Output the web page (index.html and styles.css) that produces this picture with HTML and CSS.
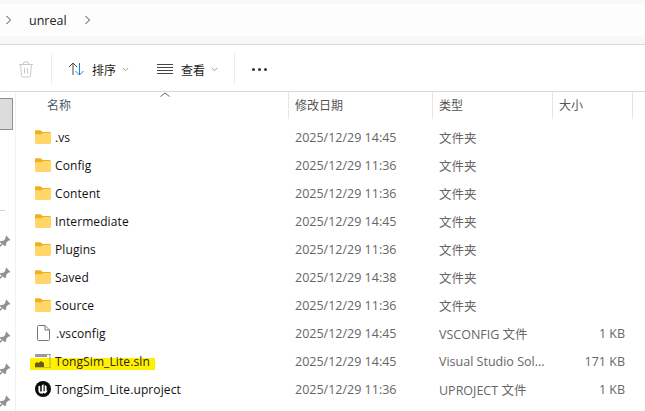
FILE: index.html
```html
<!DOCTYPE html>
<html lang="zh">
<head>
<meta charset="utf-8">
<title>unreal</title>
<link rel="stylesheet" href="styles.css">
</head>
<body>
<svg class="defs" width="0" height="0" aria-hidden="true">
  <defs>
    <symbol id="folder" viewBox="0 0 16 14">
      <path d="M0 1.600C0 .8.6.3 1.300.3h3.900c.5 0 .8.2 1.100.5L7.600 2h7c.8 0 1.400.6 1.400 1.400V5H0z" fill="#f2b01e"/>
      <path d="M0 4.300h6.200c.5 0 .9-.2 1.300-.5L8.600 3H16v9.500c0 .8-.6 1.400-1.400 1.400H1.400C.6 13.900 0 13.300 0 12.500z" fill="#ffd768"/>
    </symbol>
    <symbol id="pin" viewBox="0 0 12 12">
      <path d="M7.500.5l4 4-1.200.8-.8-.2-2 2.200.1 2-1.200 1L1.700 6.600l1-1.200 2 .1 2.200-2-.2-.8z" fill="#8b9197"/>
      <path d="M3.600 8.400L.8 11.200" stroke="#8b9197" stroke-width="1.400"/>
    </symbol>
  </defs>
</svg>
<div class="window">
  <div class="addressband">
    <div class="address">
      <svg class="crumb" width="7" height="10" viewBox="0 0 7 10"><path d="M1.500 1l4 4-4 4" fill="none" stroke="#444" stroke-width="1"/></svg>
      <span class="crumbtext">unreal</span>
      <svg class="crumb" width="7" height="10" viewBox="0 0 7 10"><path d="M1.500 1l4 4-4 4" fill="none" stroke="#444" stroke-width="1"/></svg>
    </div>
  </div>
  <div class="toolbar">
    <svg class="trash" width="16" height="17" viewBox="0 0 16 17"><path d="M1 3.500h14M5.500 3.500V2c0-.6.4-1 1-1h3c.6 0 1 .4 1 1v1.500M2.600 3.500l.9 11.300c0 .7.600 1.200 1.200 1.200h6.600c.600 0 1.200-.5 1.200-1.200l.9-11.300M6.500 7v5.500M9.500 7v5.500" fill="none" stroke="#c9c9c9" stroke-width="1"/></svg>
    <span class="sep"></span>
    <div class="tool tool-sort">
      <svg width="17" height="14" viewBox="0 0 17 14"><path d="M5 13V1M1 5l4-4 4 4" fill="none" stroke="#4a4a4a" stroke-width="1"/><path d="M11.500 1v12M7.500 9l4 4 4-4" fill="none" stroke="#1f80d0" stroke-width="1"/></svg>
      <span class="toollabel">排序</span>
      <svg class="chev" width="7" height="5" viewBox="0 0 7 5"><path d="M.8 1l2.700 2.700L6.200 1" fill="none" stroke="#9a9a9a" stroke-width="1"/></svg>
    </div>
    <div class="tool tool-view">
      <svg width="16" height="11" viewBox="0 0 16 11"><path d="M0 .5h16M0 3.500h16M0 6.500h16M0 9.500h16" stroke="#444" stroke-width="1"/></svg>
      <span class="toollabel">查看</span>
      <svg class="chev" width="7" height="5" viewBox="0 0 7 5"><path d="M.8 1l2.700 2.700L6.200 1" fill="none" stroke="#9a9a9a" stroke-width="1"/></svg>
    </div>
    <span class="sep sep-last"></span>
    <div class="more"><i></i><i></i><i></i></div>
  </div>
  <div class="body">
    <aside class="side">
      <div class="thumb"></div>
      <div class="rule"></div>
      <div class="pins">
        <svg class="pin"><use href="#pin"/></svg>
        <svg class="pin"><use href="#pin"/></svg>
        <svg class="pin"><use href="#pin"/></svg>
        <svg class="pin"><use href="#pin"/></svg>
        <svg class="pin"><use href="#pin"/></svg>
        <svg class="pin"><use href="#pin"/></svg>
      </div>
    </aside>
    <main class="list">
      <svg class="sortmark" width="10" height="5" viewBox="0 0 10 5"><path d="M.5 4.500L5 1l4.500 3.500" fill="none" stroke="#666" stroke-width="1"/></svg>
      <div class="head">
        <div class="hcell hname">名称</div>
        <div class="hcell hdate">修改日期</div>
        <div class="hcell htype">类型</div>
        <div class="hcell hsize">大小</div>
      </div>
      <div class="rows">
        <div class="row"><div class="name"><svg class="ico"><use href="#folder"/></svg><span>.vs</span></div><div class="date">2025/12/29 14:45</div><div class="type">文件夹</div><div class="size"></div></div>
        <div class="row"><div class="name"><svg class="ico"><use href="#folder"/></svg><span>Config</span></div><div class="date">2025/12/29 11:36</div><div class="type">文件夹</div><div class="size"></div></div>
        <div class="row"><div class="name"><svg class="ico"><use href="#folder"/></svg><span>Content</span></div><div class="date">2025/12/29 11:36</div><div class="type">文件夹</div><div class="size"></div></div>
        <div class="row"><div class="name"><svg class="ico"><use href="#folder"/></svg><span>Intermediate</span></div><div class="date">2025/12/29 14:45</div><div class="type">文件夹</div><div class="size"></div></div>
        <div class="row"><div class="name"><svg class="ico"><use href="#folder"/></svg><span>Plugins</span></div><div class="date">2025/12/29 11:36</div><div class="type">文件夹</div><div class="size"></div></div>
        <div class="row"><div class="name"><svg class="ico"><use href="#folder"/></svg><span>Saved</span></div><div class="date">2025/12/29 14:38</div><div class="type">文件夹</div><div class="size"></div></div>
        <div class="row"><div class="name"><svg class="ico"><use href="#folder"/></svg><span>Source</span></div><div class="date">2025/12/29 11:36</div><div class="type">文件夹</div><div class="size"></div></div>
        <div class="row"><div class="name"><svg class="ico ico-file" viewBox="0 0 13 16"><path d="M.5 1.500c0-.6.4-1 1-1h6.500l4.500 4.500v9.500c0 .6-.4 1-1 1h-10c-.6 0-1-.4-1-1zM8 .5V5h4.500" fill="#fff" stroke="#777" stroke-width="1"/></svg><span>.vsconfig</span></div><div class="date">2025/12/29 14:45</div><div class="type">VSCONFIG 文件</div><div class="size">1 KB</div></div>
        <div class="row row-sln"><div class="name"><div class="mark"><svg class="ico ico-sln" viewBox="0 0 16 14"><rect x="14.500" y="1" width="1" height="12" fill="#a8a850"/><rect x="0" y="0" width="16" height="1" fill="#9a9a9a"/><rect x="0" y="1" width="12" height="2" fill="#9a9a9a"/><rect x="0" y="13" width="16" height="1" fill="#c8c030"/><path d="M0 13V9.500l2-1.500 1.500 1L6 7l3 2v4z" fill="#6b5a10"/></svg><span>TongSim_Lite.sln</span></div></div><div class="date">2025/12/29 14:45</div><div class="type">Visual Studio Sol...</div><div class="size">171 KB</div></div>
        <div class="row"><div class="name"><svg class="ico ico-ue" viewBox="0 0 16 16"><circle cx="8" cy="8" r="8" fill="#0a0a0a"/><path d="M3.400 5.200c.7-.7 1.800-.7 1.800.4v4.300c0 .7.7.9 1.500.3V4.700c.5-.7 1.100-1.100 1.900-1.400v7.300l1.100-.6V4.100c.8.300 1.400.8 1.900 1.500v4.400l1-.7c-.3 1.400-1.400 2.700-2.900 3.400l-1.100-1-1.100 1c-1.900.1-4.100-.9-4.100-3.300z" fill="#fff"/></svg><span>TongSim_Lite.uproject</span></div><div class="date">2025/12/29 11:36</div><div class="type">UPROJECT 文件</div><div class="size">1 KB</div></div>
      </div>
    </main>
  </div>
</div>
</body>
</html>
```
FILE: styles.css
```css
* { box-sizing: border-box; }
html, body { margin: 0; padding: 0; }
body {
  width: 645px;
  height: 411px;
  overflow: hidden;
  background: #fff;
  font-family: "Noto Sans CJK SC", "Open Sans", sans-serif;
  font-size: 12px;
  color: #1a1a1a;
}
.defs { position: absolute; }
.window { display: flex; flex-direction: column; height: 411px; }

.addressband {
  height: 45px;
  padding: 4px 0 8px;
  background: #f8f8f8;
  border-bottom: 1px solid #d9d9d9;
}
.address {
  height: 32px;
  background: #fdfdfd;
  display: flex;
  align-items: center;
  padding-left: 5px;
}
.crumbtext {
  font-family: "Open Sans", sans-serif;
  font-size: 12.5px;
  margin: 0 17px 0 17px;
  color: #222;
}

.toolbar {
  height: 47px;
  border-bottom: 1px solid #d9d9d9;
  display: flex;
  align-items: center;
  padding-left: 18px;
  padding-top: 2px;
}
.trash { margin-right: 17px; }
.sep { width: 1px; height: 32px; background: #ececec; }
.tool { display: flex; align-items: center; }
.tool-sort { margin-left: 16px; }
.tool-view { margin-left: 28px; }
.toollabel {
  font-size: 12px;
  color: #222;
  margin-left: 7px;
  margin-right: 6px;
}
.tool-view .toollabel { margin-left: 8px; }
.sep-last { margin-left: 16px; }
.more { display: flex; gap: 3px; margin-left: 17px; }
.more i { width: 3px; height: 3px; border-radius: 50%; background: #333; }

.body { flex: 1; display: flex; min-height: 0; }
.side {
  width: 16px;
  border-right: 1px solid #f1f1f1;
  position: relative;
}
.thumb {
  width: 13px;
  height: 32px;
  margin-top: 6px;
  background: #dcdcdc;
  border: 1px solid #8f8f8f;
  border-left: 0;
}
.rule { width: 5px; height: 1px; margin-top: 80px; background: #d4d4d4; }
.pins {
  display: flex;
  flex-direction: column;
  gap: 19px;
  margin-top: 24px;
}
.pin { width: 13px; height: 13px; margin-left: -2px; }

.list { flex: 1; position: relative; }
.sortmark { position: absolute; left: 144px; top: 0; }
.head { display: flex; height: 31px; color: #4c5a6a; font-size: 12px; }
.hcell { height: 27px; line-height: 26px; border-right: 1px solid #e5e5e5; }
.hname { width: 273px; padding-left: 31px; }
.hdate { width: 144px; padding-left: 6px; color: #555; }
.htype { width: 120px; padding-left: 6px; color: #555; }
.hsize { width: 80px; padding-left: 6px; color: #555; }

.rows { display: flex; flex-direction: column; }
.row { display: flex; height: 28px; align-items: center; font-size: 12px; }
.name { width: 273px; padding-left: 19px; display: flex; align-items: center; color: #111; font-family: "Open Sans", sans-serif; letter-spacing: .1px; }
.ico { width: 16px; height: 14px; margin-right: 4px; flex: none; }
.ico-file { height: 16px; width: 13px; margin: 0 6px 0 2px; }
.ico-ue { height: 16px; }
.mark {
  display: flex;
  align-items: center;
  position: relative;
  height: 14px;
  margin-left: -5px;
  padding: 0 5px 0 5px;
  color: #2a1f1f;
}
.mark > * { position: relative; }
.mark::before {
  content: "";
  position: absolute;
  left: 0;
  right: 0;
  top: 4px;
  height: 12px;
  background: #fff000;
}
.date { width: 144px; padding-left: 6px; color: #666; font-family: "Open Sans", sans-serif; font-size: 12.5px; }
.type { width: 120px; padding-left: 6px; color: #666; font-family: "Open Sans", "Noto Sans CJK SC", sans-serif; font-size: 12.5px; }
.size { width: 80px; padding-right: 8px; text-align: right; color: #666; font-family: "Open Sans", sans-serif; font-size: 12.5px; }
```
